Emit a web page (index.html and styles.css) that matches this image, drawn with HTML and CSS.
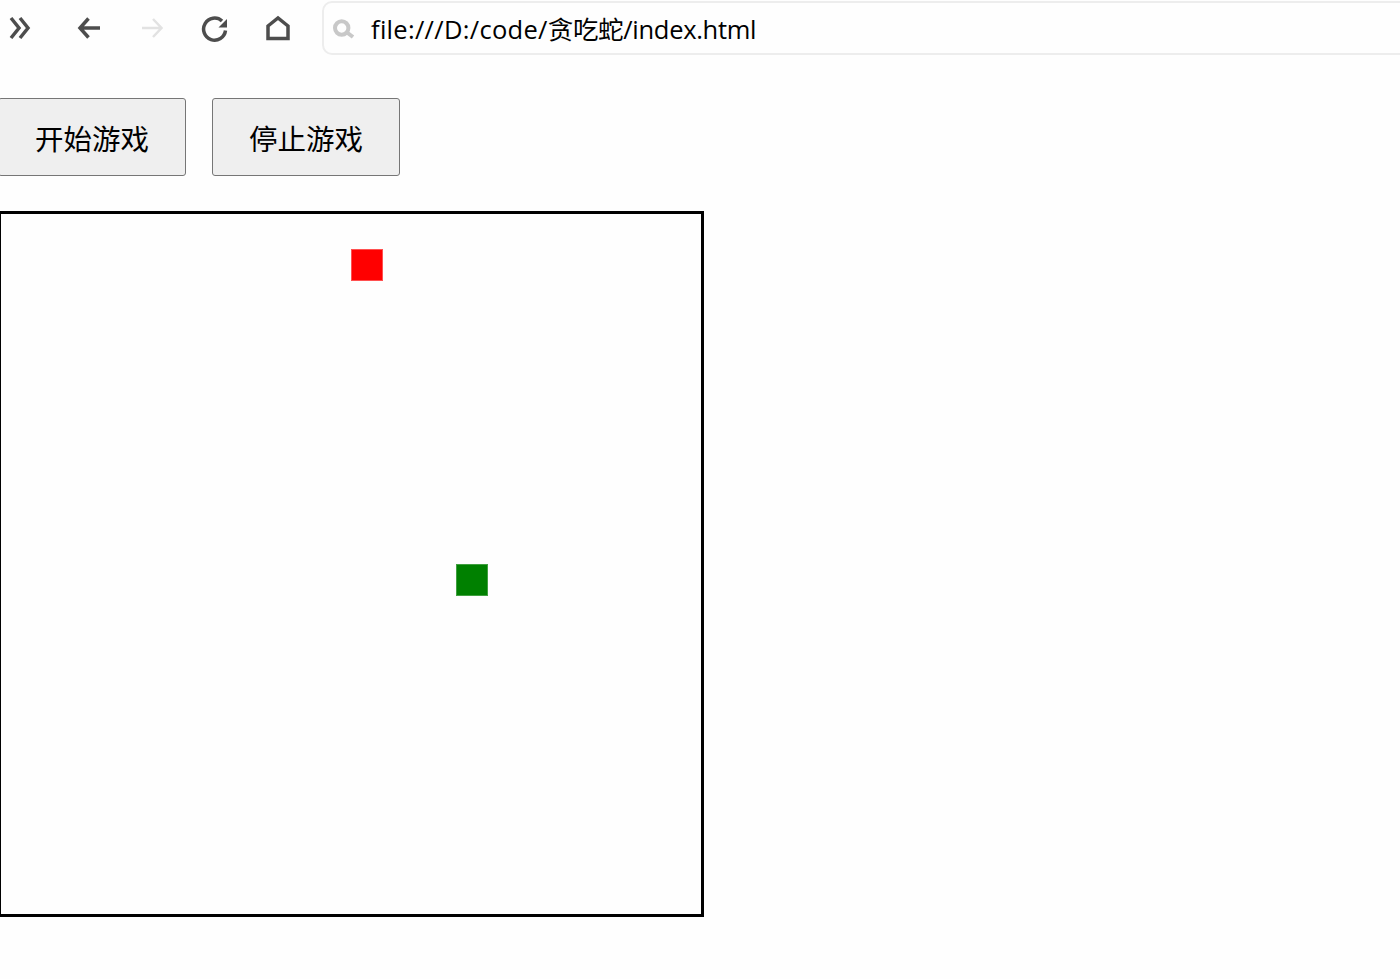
FILE: index.html
```html
<!doctype html>
<html lang="zh-CN">
  <head>
    <meta charset="UTF-8" />
    <meta name="viewport" content="width=device-width, initial-scale=1.0" />
    <title>贪吃蛇</title>
    <link rel="stylesheet" href="styles.css">
  </head>
  <body>
    <div class="toolbar">
      <svg class="icon icon-more" width="24" height="24" viewBox="0 0 24 24"><path d="M3 2l8 10-8 10M12 2l8 10-8 10"/></svg>
      <svg class="icon icon-back" width="28" height="28" viewBox="0 0 28 28"><path d="M25 14H6M13.500 4.500L5 14l8.500 9.500"/></svg>
      <svg class="icon icon-forward" width="28" height="28" viewBox="0 0 28 28"><path d="M4 14h19M15 5l8.500 9-8.500 9"/></svg>
      <svg class="icon icon-reload" width="30" height="30" viewBox="0 0 30 30"><path d="M22 8A11 11 0 1 0 25.500 17.500"/><path class="fill" d="M18.500 14.500h8.500V6z"/></svg>
      <svg class="icon icon-home" width="30" height="30" viewBox="0 0 30 30"><path d="M5 25.500V13l10-8 10 8v12.500z"/></svg>
      <div class="address">
        <svg class="search" width="24" height="24" viewBox="0 0 24 24"><circle cx="9.700" cy="12" r="6.700"/><path d="M15 16.500l6 4.500"/></svg>
        <span class="url"><span class="url-dir">file:///D:/code/</span>贪吃蛇/index.html</span>
      </div>
    </div>
    <div class="page">
      <div class="controls">
        <button class="btn">开始游戏</button>
        <button class="btn">停止游戏</button>
      </div>
      <div class="map">
        <div class="food"></div>
        <div class="snake"></div>
      </div>
    </div>
  </body>
</html>
```

FILE: styles.css
```css
body {
  margin: 0;
  height: 979px;
  overflow: hidden;
  background-color: #fefefe;
  font-family: "Open Sans", "Noto Sans", "Noto Sans CJK SC", sans-serif;
}

.toolbar {
  display: flex;
  align-items: center;
  height: 56px;
  padding-left: 8px;
}

.icon {
  flex: none;
  fill: none;
  stroke: #4d4d4d;
  stroke-width: 3.500;
}

.icon .fill {
  fill: #4d4d4d;
  stroke: none;
}

.icon-more {
  margin-right: 43px;
}

.icon-back {
  margin-right: 35px;
}

.icon-forward {
  margin-right: 34px;
  stroke: #e2e2e2;
  stroke-width: 2.500;
}

.icon-reload {
  margin-right: 33px;
}

.icon-home {
  margin-right: 29px;
}

.address {
  display: flex;
  flex: 1;
  align-items: center;
  height: 54px;
  box-sizing: border-box;
  margin-right: -20px;
  padding-left: 8px;
  border: 2px solid #ededed;
  border-radius: 10px;
}

.search {
  fill: none;
  stroke: #c8c8c8;
  stroke-width: 4;
}

.url {
  margin: 0 0 2px 15px;
  font-size: 25.500px;
  letter-spacing: -0.3px;
  color: #000;
}

.url-dir {
  letter-spacing: 0.3px;
}

.page {
  margin-left: -2px;
}

.controls {
  display: flex;
  gap: 26px;
  margin-top: 42px;
}

.btn {
  width: 188px;
  height: 78px;
  padding: 0;
  background-color: #efefef;
  border: 1.500px solid #767676;
  border-radius: 3px;
  font-family: inherit;
  font-size: 28.500px;
  color: #000;
}

.map {
  position: relative;
  width: 700px;
  height: 700px;
  margin-top: 35px;
  border: 3px solid #000;
}

.food,
.snake {
  position: absolute;
  box-sizing: border-box;
  width: 32px;
  height: 32px;
  border: 1px solid;
}

.food {
  left: 350px;
  top: 35px;
  background-color: #f00;
  border-color: #ff5050;
}

.snake {
  left: 455px;
  top: 350px;
  background-color: #008000;
  border-color: #40a040;
}
```
